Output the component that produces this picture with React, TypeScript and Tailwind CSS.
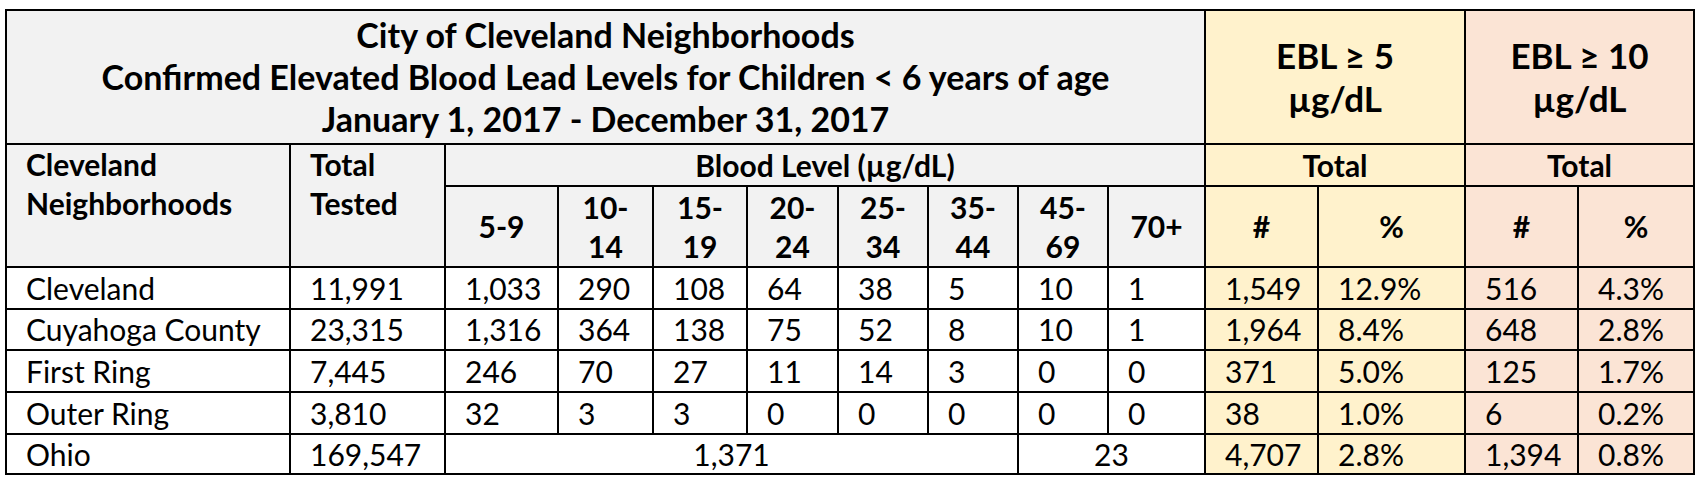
import React from "react";

const gray = "bg-[#f2f2f2]";
const yel = "bg-[#fff2cc]";
const pink = "bg-[#fbe4d5]";

type Row = {
  name: string;
  total: string;
  levels: string[];
  e5: [string, string];
  e10: [string, string];
};

const rows: Row[] = [
  { name: "Cleveland", total: "11,991", levels: ["1,033", "290", "108", "64", "38", "5", "10", "1"], e5: ["1,549", "12.9%"], e10: ["516", "4.3%"] },
  { name: "Cuyahoga County", total: "23,315", levels: ["1,316", "364", "138", "75", "52", "8", "10", "1"], e5: ["1,964", "8.4%"], e10: ["648", "2.8%"] },
  { name: "First Ring", total: "7,445", levels: ["246", "70", "27", "11", "14", "3", "0", "0"], e5: ["371", "5.0%"], e10: ["125", "1.7%"] },
  { name: "Outer Ring", total: "3,810", levels: ["32", "3", "3", "0", "0", "0", "0", "0"], e5: ["38", "1.0%"], e10: ["6", "0.2%"] },
];

const cell = "flex items-center pl-[19px] whitespace-nowrap";
const hc = "flex items-center justify-center text-center font-bold";

export default function App() {
  return (
    <div className="w-[1701px] h-[489px] bg-white pt-[9px] pl-[5px] font-['Lato',sans-serif] text-black text-[30px] leading-[39px]">
      <div className="grid w-fit bg-black p-[2px] gap-[2px] grid-cols-[282px_153px_111px_93px_92px_89px_88px_88px_88px_95px_111px_145px_111px_114px] grid-rows-[132px_40px_79px_40px_39px_40px_40px_38px]">
        {/* Title row */}
        <div className={`${gray} col-span-10 ${hc} flex-col text-[34px] leading-[42px]`}>
          <div>City of Cleveland Neighborhoods</div>
          <div>Confirmed Elevated Blood Lead Levels for Children &lt; 6 years of age</div>
          <div>January 1, 2017 - December 31, 2017</div>
        </div>
        <div className={`${yel} col-span-2 ${hc} flex-col text-[35px] leading-[43px]`}>
          <div>EBL ≥ 5</div>
          <div>µg/dL</div>
        </div>
        <div className={`${pink} col-span-2 ${hc} flex-col text-[35px] leading-[43px]`}>
          <div>EBL ≥ 10</div>
          <div>µg/dL</div>
        </div>

        {/* Header rows */}
        <div className={`${gray} row-span-2 pl-[19px] font-bold`}>
          Cleveland
          <br />
          Neighborhoods
        </div>
        <div className={`${gray} row-span-2 pl-[19px] font-bold`}>
          Total
          <br />
          Tested
        </div>
        <div className={`${gray} col-span-8 ${hc}`}>Blood Level (µg/dL)</div>
        <div className={`${yel} col-span-2 ${hc}`}>Total</div>
        <div className={`${pink} col-span-2 ${hc}`}>Total</div>

        <div className={`${gray} ${hc}`}>5-9</div>
        <div className={`${gray} ${hc}`}>10-<br />14</div>
        <div className={`${gray} ${hc}`}>15-<br />19</div>
        <div className={`${gray} ${hc}`}>20-<br />24</div>
        <div className={`${gray} ${hc}`}>25-<br />34</div>
        <div className={`${gray} ${hc}`}>35-<br />44</div>
        <div className={`${gray} ${hc}`}>45-<br />69</div>
        <div className={`${gray} ${hc}`}>70+</div>
        <div className={`${yel} ${hc}`}>#</div>
        <div className={`${yel} ${hc}`}>%</div>
        <div className={`${pink} ${hc}`}>#</div>
        <div className={`${pink} ${hc}`}>%</div>

        {/* Data rows */}
        {rows.map((r) => (
          <React.Fragment key={r.name}>
            <div className={`bg-white ${cell}`}>{r.name}</div>
            <div className={`bg-white ${cell}`}>{r.total}</div>
            {r.levels.map((v, i) => (
              <div key={i} className={`bg-white ${cell}`}>{v}</div>
            ))}
            <div className={`${yel} ${cell}`}>{r.e5[0]}</div>
            <div className={`${yel} ${cell}`}>{r.e5[1]}</div>
            <div className={`${pink} ${cell}`}>{r.e10[0]}</div>
            <div className={`${pink} ${cell}`}>{r.e10[1]}</div>
          </React.Fragment>
        ))}

        {/* Ohio */}
        <div className={`bg-white ${cell}`}>Ohio</div>
        <div className={`bg-white ${cell}`}>169,547</div>
        <div className="bg-white col-span-6 flex items-center justify-center">1,371</div>
        <div className="bg-white col-span-2 flex items-center justify-center">23</div>
        <div className={`${yel} ${cell}`}>4,707</div>
        <div className={`${yel} ${cell}`}>2.8%</div>
        <div className={`${pink} ${cell}`}>1,394</div>
        <div className={`${pink} ${cell}`}>0.8%</div>
      </div>
    </div>
  );
}
